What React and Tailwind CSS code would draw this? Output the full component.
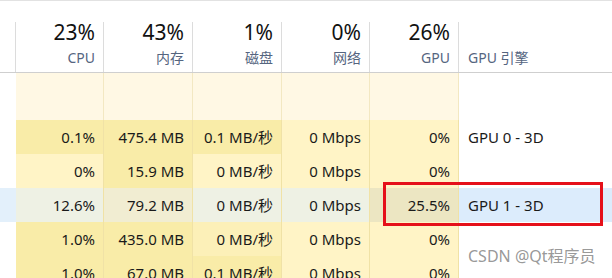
import React from "react";

const D = "bg-[#f9eca8]";
const L = "bg-[#fff4c6]";
const HL = "bg-[#eef1e4]";
const HD = "bg-[#ece6c2]";

const headers = [
  { pct: "23%", label: "CPU" },
  { pct: "43%", label: "内存" },
  { pct: "1%", label: "磁盘" },
  { pct: "0%", label: "网络" },
  { pct: "26%", label: "GPU" },
];

const rows = [
  { vals: ["0.1%", "475.4 MB", "0.1 MB/秒", "0 Mbps", "0%"], bg: [D, D, D, L, L], engine: "GPU 0 - 3D" },
  { vals: ["0%", "15.9 MB", "0 MB/秒", "0 Mbps", "0%"], bg: [L, D, L, L, L], engine: "" },
  { vals: ["12.6%", "79.2 MB", "0 MB/秒", "0 Mbps", "25.5%"], bg: [HL, "bg-[#f1edd2]", HL, HL, HD], engine: "GPU 1 - 3D", hl: true },
  { vals: ["1.0%", "435.0 MB", "0 MB/秒", "0 Mbps", "0%"], bg: [D, D, "bg-[#fcf0b8]", L, L], engine: "" },
  { vals: ["1.0%", "67.0 MB", "0.1 MB/秒", "0 Mbps", "0%"], bg: [D, D, D, L, L], engine: "" },
];

const cols = "grid grid-cols-[16px_88px_89px_89px_88px_89px_1fr]";

export default function App() {
  return (
    <div
      className="relative w-[612px] h-[278px] overflow-hidden bg-white text-[#1a1a1a]"
      style={{ fontFamily: '"Noto Sans", "Noto Sans CJK SC", sans-serif' }}
    >
      {/* header */}
      <div className={`${cols} h-[73px] border-t border-t-[#e2e2e2] border-b border-b-[#cfcfcf]`}>
        <div className="mt-[21px] border-r border-[#dcdcdc]" />
        {headers.map((h) => (
          <div key={h.label} className="mt-[21px] border-r border-[#dcdcdc] pr-2 text-right">
            <div className="-mt-[2px] text-[21px] leading-[24px] text-[#111]">{h.pct}</div>
            <div className="mt-[5px] text-[14px] leading-[18px] text-[#55657f]">{h.label}</div>
          </div>
        ))}
        <div className="mt-[21px] pl-[9px]">
          <div className="mt-[27px] text-[14px] leading-[18px] text-[#55657f]">GPU 引擎</div>
        </div>
      </div>

      {/* empty band */}
      <div className={`${cols} h-[47px]`}>
        <div className="bg-white" />
        {[0, 1, 2, 3, 4].map((i) => (
          <div key={i} className="bg-[#fff8e4] border-r border-[#f3e8c2]" />
        ))}
        <div className="bg-white" />
      </div>

      {/* rows */}
      {rows.map((r, ri) => (
        <div key={ri} className={`${cols} h-[34px] text-[15px]`}>
          <div className={r.hl ? "bg-[#e3f0fb]" : "bg-white"} />
          {r.vals.map((v, i) => (
            <div
              key={i}
              className={`${r.bg[i]} flex items-center justify-end pr-2 border-r border-[#f0e2a6]`}
            >
              {v}
            </div>
          ))}
          <div className={`${r.hl ? "bg-[#dcecfc]" : "bg-white"} flex items-center pl-[9px]`}>
            {r.engine}
          </div>
        </div>
      ))}

      {/* red box */}
      <div className="absolute left-[383px] top-[182px] w-[220px] h-[44px] border-[3px] border-[#e5101a]" />

      {/* watermark */}
      <div className="absolute left-[468px] top-[245px] text-[16px] leading-[22px] text-[#8c8c8c]/90">
        CSDN @Qt程序员
      </div>
    </div>
  );
}
